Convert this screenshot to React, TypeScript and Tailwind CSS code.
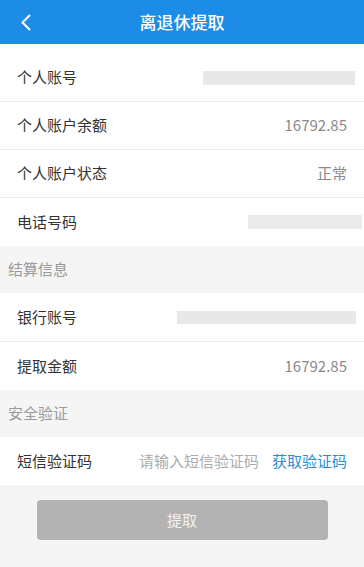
const font = "font-['Noto_Sans_CJK_SC','Noto_Sans',sans-serif]"

const Row = ({ label, children, last, tall }: { label: string; children?: React.ReactNode; last?: boolean; tall?: boolean }) => (
  <div className={`flex ${tall ? 'h-[49px]' : 'h-12'} items-center justify-between bg-white pl-[17px] pr-[17px] ${last ? '' : 'border-b border-[#ececec]'}`}>
    <span className="text-[15px] text-[#333]">{label}</span>
    {children}
  </div>
)

const Section = ({ title }: { title: string }) => (
  <div className="flex h-[47px] items-center bg-[#f5f5f5] px-[8px] text-[15px] text-[#9a9a9a]">{title}</div>
)

export default function App() {
  return (
    <div className={`flex min-h-[567px] w-[364px] flex-col bg-[#f5f5f5] ${font}`}>
      {/* 顶部导航 */}
      <div className="relative flex h-[44px] items-center justify-center bg-[#1c8ce6]">
        <svg className="absolute left-[20px] top-[14px]" width="12" height="17" viewBox="0 0 12 17" fill="none">
          <path d="M9.5 1.5 L2.5 8.5 L9.5 15.5" stroke="white" strokeWidth="2" strokeLinecap="round" strokeLinejoin="round" />
        </svg>
        <span className="text-[17px] font-medium text-white">离退休提取</span>
      </div>

      <div className="h-[10px] bg-white" />
      <Row label="个人账号">
        <div className="mr-[-8px] h-[14px] w-[152px] bg-[#e8e8e8]" />
      </Row>
      <Row label="个人账户余额">
        <span className="text-[15px] text-[#8a8a8a]">16792.85</span>
      </Row>
      <Row label="个人账户状态">
        <span className="text-[15px] text-[#8a8a8a]">正常</span>
      </Row>
      <Row label="电话号码" last>
        <div className="mr-[-15px] h-[14px] w-[114px] bg-[#ebebeb]" />
      </Row>

      <Section title="结算信息" />
      <Row label="银行账号" tall>
        <div className="mr-[-9px] h-[13px] w-[179px] bg-[#e8e8e8]" />
      </Row>
      <Row label="提取金额" last>
        <span className="text-[15px] text-[#8a8a8a]">16792.85</span>
      </Row>

      <Section title="安全验证" />
      <Row label="短信验证码" last tall>
        <div className="flex items-center gap-[13px] text-[15px]">
          <span className="text-[#ababab]">请输入短信验证码</span>
          <span className="text-[#2a8cd4]">获取验证码</span>
        </div>
      </Row>
      <div className="h-px bg-[#ececec]" />

      <div className="flex justify-center pt-[13px]">
        <button className="h-[40px] w-[291px] rounded-[4px] bg-[#b3b3b3] text-[15px] text-[#f2f2f2]">提取</button>
      </div>
    </div>
  )
}
